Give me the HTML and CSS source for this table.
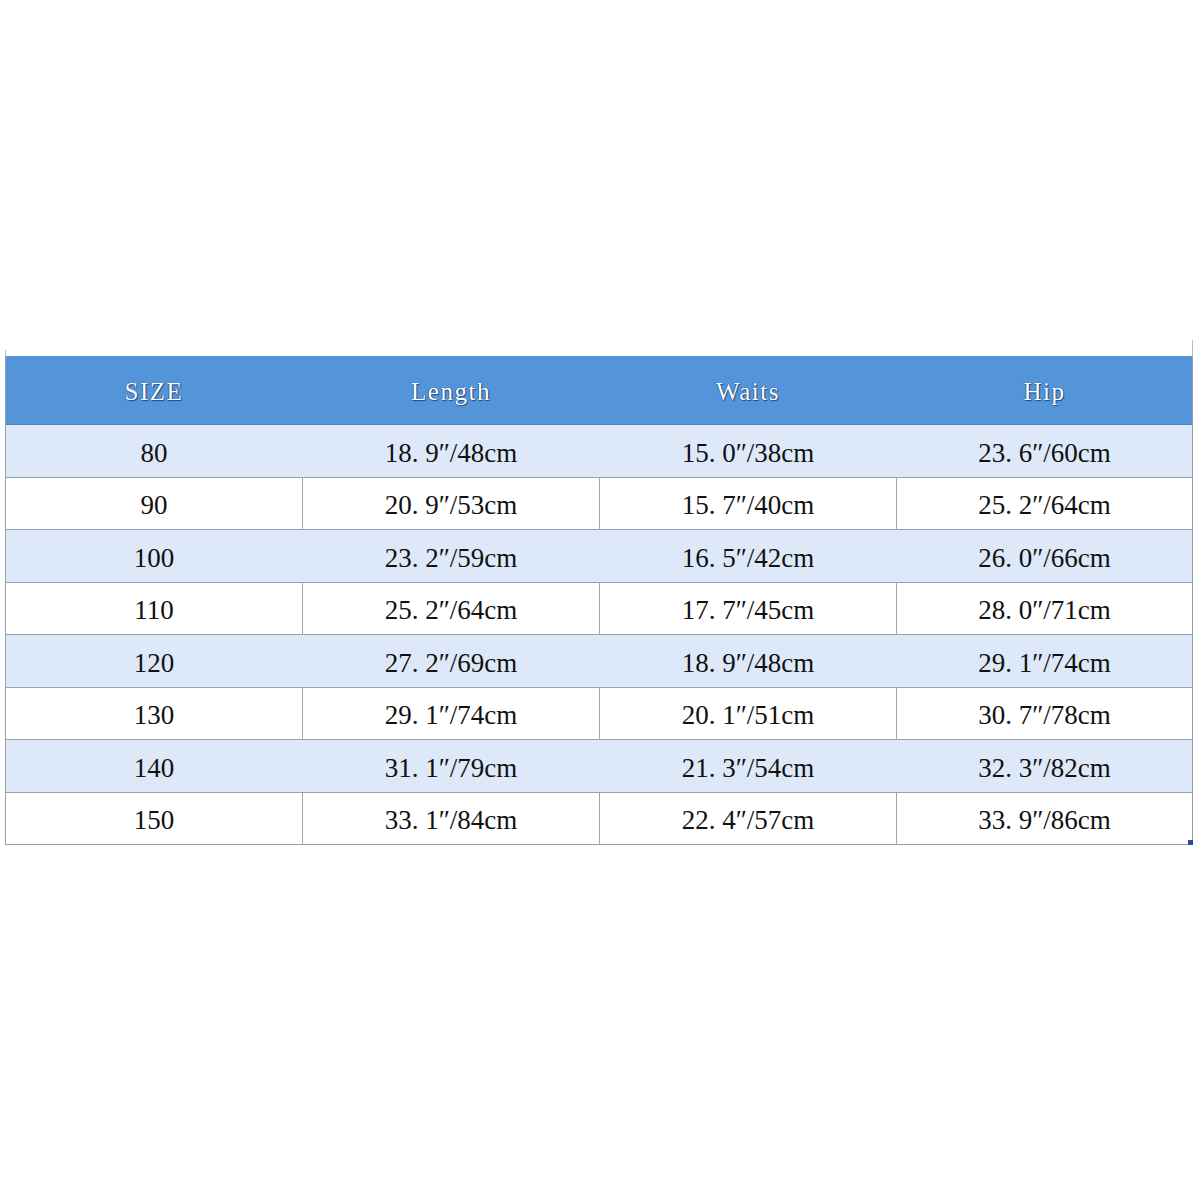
FILE: index.html
```html
<!DOCTYPE html>
<html>
<head>
<meta charset="utf-8">
<link rel="stylesheet" href="styles.css">
</head>
<body>
<div class="page">
  <div class="sheet">
    <div class="row head">
      <div class="cell">SIZE</div><div class="cell">Length</div><div class="cell">Waits</div><div class="cell">Hip</div>
    </div>
    <div class="row alt"><div class="cell">80</div><div class="cell">18. 9″/48cm</div><div class="cell">15. 0″/38cm</div><div class="cell">23. 6″/60cm</div></div>
    <div class="row"><div class="cell">90</div><div class="cell">20. 9″/53cm</div><div class="cell">15. 7″/40cm</div><div class="cell">25. 2″/64cm</div></div>
    <div class="row alt"><div class="cell">100</div><div class="cell">23. 2″/59cm</div><div class="cell">16. 5″/42cm</div><div class="cell">26. 0″/66cm</div></div>
    <div class="row"><div class="cell">110</div><div class="cell">25. 2″/64cm</div><div class="cell">17. 7″/45cm</div><div class="cell">28. 0″/71cm</div></div>
    <div class="row alt"><div class="cell">120</div><div class="cell">27. 2″/69cm</div><div class="cell">18. 9″/48cm</div><div class="cell">29. 1″/74cm</div></div>
    <div class="row"><div class="cell">130</div><div class="cell">29. 1″/74cm</div><div class="cell">20. 1″/51cm</div><div class="cell">30. 7″/78cm</div></div>
    <div class="row alt"><div class="cell">140</div><div class="cell">31. 1″/79cm</div><div class="cell">21. 3″/54cm</div><div class="cell">32. 3″/82cm</div></div>
    <div class="row last"><div class="cell">150</div><div class="cell">33. 1″/84cm</div><div class="cell">22. 4″/57cm</div><div class="cell">33. 9″/86cm</div></div>
    <span class="handle"></span>
  </div>
</div>
</body>
</html>
```
FILE: styles.css
```css
html, body {
  margin: 0;
  padding: 0;
  background: #ffffff;
}
.page {
  width: 1200px;
  height: 1200px;
  padding-top: 356px;
  box-sizing: border-box;
}
.sheet {
  position: relative;
  margin-left: 5px;
  width: 1188px;
  border-left: 1px solid #9aa0aa;
  border-right: 1px solid #9aa0aa;
  box-sizing: border-box;
}
.sheet::before {
  content: "";
  position: absolute;
  left: -1px;
  top: -6px;
  height: 6px;
  border-left: 1px solid #b8bcc4;
}
.sheet::after {
  content: "";
  position: absolute;
  right: -1px;
  top: -16px;
  height: 16px;
  border-right: 1px solid #b8bcc4;
}
.row {
  display: grid;
  grid-template-columns: 296px 297px 297px 1fr;
  height: 51.5px;
  border-bottom: 1px solid #9aa3b4;
  background: #ffffff;
  font-family: "Liberation Serif", "Times New Roman", serif;
  font-size: 27px;
  color: #111111;
}
.row .cell {
  display: flex;
  align-items: center;
  justify-content: center;
  padding-top: 5px;
  border-left: 1px solid #a6a6a6;
}
.row .cell:first-child {
  border-left: none;
}
.row.alt {
  background: #dde9f8;
}
.row.alt .cell {
  border-left-color: transparent;
}
.row.head {
  height: 68px;
  background: #5495da;
  border-bottom: 1px solid #4a7fb8;
  color: #ffffff;
  font-size: 25px;
  letter-spacing: 1.5px;
  text-shadow: 0 0 1px #173f70, 1px 1px 1px #1f4d85, -0.5px -0.5px 0.5px #2a5c96;
}
.row.head .cell {
  border-left-color: transparent;
  padding-top: 4px;
}
.row.last {
  border-bottom: 1px solid #8f9bb0;
}
.handle {
  position: absolute;
  right: -1px;
  bottom: 0;
  width: 5px;
  height: 5px;
  background: #1f4ea8;
}
```
